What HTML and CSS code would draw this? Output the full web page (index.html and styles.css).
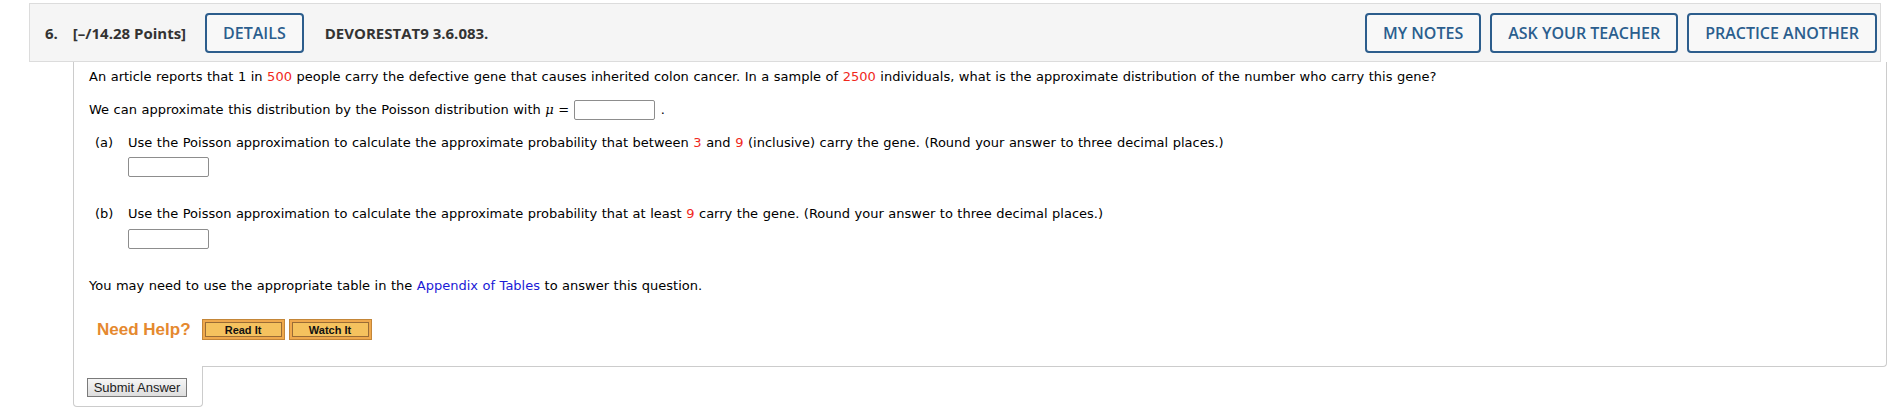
FILE: index.html
```html
<!DOCTYPE html>
<html>
<head>
<meta charset="utf-8">
<link rel="stylesheet" href="styles.css">
</head>
<body>
<div class="page">
  <div class="qhead">
    <div class="qleft">
      <span class="qnum">6.</span>
      <span class="qpts">[–/14.28 Points]</span>
      <button class="hbtn details">DETAILS</button>
      <span class="qid">DEVORESTAT9 3.6.083.</span>
    </div>
    <div class="qright">
      <button class="hbtn">MY NOTES</button>
      <button class="hbtn">ASK YOUR TEACHER</button>
      <button class="hbtn">PRACTICE ANOTHER</button>
    </div>
  </div>
  <div class="qbody">
    <div class="row r1">An article reports that 1 in <span class="red">500</span> people carry the defective gene that causes inherited colon cancer. In a sample of <span class="red">2500</span> individuals, what is the approximate distribution of the number who carry this gene?</div>
    <div class="row r2"><span>We can approximate this distribution by the Poisson distribution with <i class="mu">μ</i> =&nbsp;</span><span class="ans"></span><span class="dot">.</span></div>
    <div class="row part pa"><span class="lbl">(a)</span><span>Use the Poisson approximation to calculate the approximate probability that between <span class="red">3</span> and <span class="red">9</span> (inclusive) carry the gene. (Round your answer to three decimal places.)</span></div>
    <div class="ansrow ia"><span class="ans"></span></div>
    <div class="row part pb"><span class="lbl">(b)</span><span>Use the Poisson approximation to calculate the approximate probability that at least <span class="red">9</span> carry the gene. (Round your answer to three decimal places.)</span></div>
    <div class="ansrow ib"><span class="ans"></span></div>
    <div class="row note">You may need to use the appropriate table in the <span class="link">Appendix of Tables</span> to answer this question.</div>
    <div class="help">
      <span class="needhelp">Need Help?</span>
      <button class="hb">Read It</button>
      <button class="hb">Watch It</button>
    </div>
  </div>
  <div class="tab"><button class="submit">Submit Answer</button></div>
</div>
</body>
</html>
```

FILE: styles.css
```css
body {
  margin: 0;
  background: #fff;
}

.page {
  padding: 3px 0 0 29px;
}

.qhead {
  box-sizing: border-box;
  width: 1852px;
  height: 59px;
  border: 1px solid #dcdcdc;
  background: #f5f5f5;
  display: flex;
  align-items: center;
  justify-content: space-between;
  padding: 0 3px 0 15px;
  font-family: "Open Sans", "Liberation Sans", sans-serif;
  color: #333;
}

.qleft {
  display: flex;
  align-items: center;
}

.qnum {
  font-weight: 700;
  font-size: 15px;
  margin-right: 15px;
}

.qpts {
  font-weight: 700;
  font-size: 15px;
}

.qid {
  font-weight: 700;
  font-size: 15px;
  margin-left: 21px;
}

.details {
  margin-left: 19px;
}

.qright {
  display: flex;
  gap: 9px;
}

.hbtn {
  box-sizing: border-box;
  height: 40px;
  border: 2px solid #2c5d8c;
  border-radius: 4px;
  background: #f8f8f8;
  color: #2b5e8e;
  font-family: "Open Sans", "Liberation Sans", sans-serif;
  font-weight: 600;
  font-size: 16px;
  padding: 0 16px;
}

.qbody {
  margin-left: 44px;
  width: 1814px;
  box-sizing: border-box;
  border: 1px solid #cccccc;
  border-top: none;
  border-bottom-right-radius: 4px;
  padding: 7px 0 26px 15px;
  font-family: "DejaVu Sans", Verdana, sans-serif;
  font-size: 13px;
  word-spacing: 0.4px;
  line-height: 16px;
  color: #000;
}

.row {
  height: 16px;
  white-space: nowrap;
}

.r2 {
  margin-top: 14px;
  height: 22px;
  display: flex;
  align-items: center;
}

.mu {
  font-family: "DejaVu Serif", "Liberation Serif", serif;
  font-style: italic;
}

.dot {
  margin-left: 6px;
}

.part {
  display: flex;
  padding-left: 6px;
}

.pa {
  margin-top: 14px;
}

.pb {
  margin-top: 29px;
}

.lbl {
  width: 33px;
}

.ansrow {
  padding-left: 39px;
  height: 20px;
}

.ia {
  margin-top: 6px;
}

.ib {
  margin-top: 7px;
}

.ans {
  display: inline-block;
  box-sizing: border-box;
  width: 81px;
  height: 20px;
  border: 1px solid #8d8d8d;
  border-radius: 2px;
  background: #fff;
  vertical-align: top;
}

.note {
  margin-top: 29px;
}

.red {
  color: #f0281c;
}

.link {
  color: #1a1ad6;
}

.help {
  margin-top: 25px;
  height: 21px;
  display: flex;
  align-items: center;
  padding-left: 8px;
  word-spacing: 0;
}

.needhelp {
  font-family: "Liberation Sans", Arial, sans-serif;
  font-weight: 700;
  font-size: 17px;
  color: #e5892f;
  margin-right: 11px;
}

.hb {
  box-sizing: border-box;
  width: 83px;
  height: 21px;
  margin-right: 4px;
  padding: 0;
  border: 1px solid #c48638;
  background: #f5c25e;
  box-shadow: inset 0 0 0 2px #efa94d, inset 0 0 0 3px #9a6c36;
  font-family: "Liberation Sans", Arial, sans-serif;
  font-weight: 700;
  font-size: 11px;
  color: #111;
}

.tab {
  margin-left: 44px;
  margin-top: -1px;
  width: 130px;
  box-sizing: border-box;
  border: 1px solid #cccccc;
  border-top: none;
  border-radius: 0 0 4px 4px;
  background: #fff;
  padding: 12px 0 9px 13px;
}

.submit {
  display: block;
  box-sizing: border-box;
  width: 100px;
  height: 19px;
  padding: 0;
  border: 1px solid #7a7a7a;
  background: linear-gradient(#f6f6f6, #dddddd);
  font-family: "Liberation Sans", Arial, sans-serif;
  font-size: 13px;
  color: #222;
}
```
